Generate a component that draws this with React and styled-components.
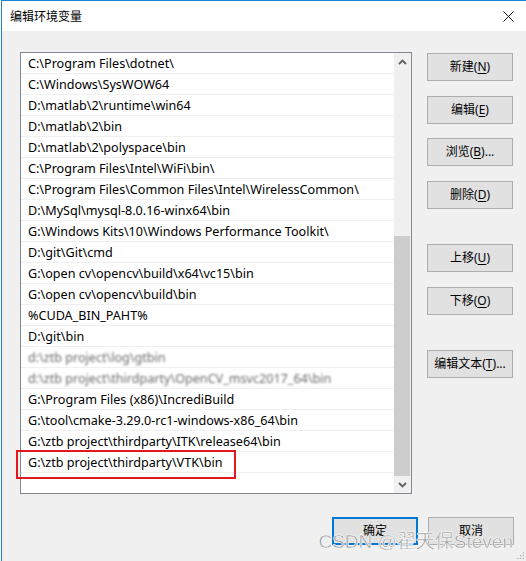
import styled, { createGlobalStyle } from "styled-components";

const GlobalStyle = createGlobalStyle`
  html, body {
    margin: 0;
    padding: 0;
    background: #ffffff;
  }
  * {
    box-sizing: border-box;
  }
`;

const uiFont = `"Noto Sans", "Noto Sans CJK SC", sans-serif`;

const Window = styled.div`
  position: relative;
  margin-left: 1px;
  width: 525px;
  height: 561px;
  border-top: 1px solid #1883d7;
  border-left: 1px solid #1883d7;
  background: #f0f0f0;
  font-family: ${uiFont};
  font-size: 12px;
  color: #000;
  display: flex;
  flex-direction: column;
  overflow: hidden;
`;

const TitleBar = styled.div`
  height: 30px;
  flex: none;
  background: #ffffff;
  display: flex;
  align-items: center;
  justify-content: space-between;
  padding: 0 12px 0 8px;
`;

const Title = styled.span`
  font-family: "Noto Sans CJK SC", sans-serif;
  font-size: 12px;
  line-height: 1;
`;

const CloseIcon = () => (
  <svg width="11" height="11" viewBox="0 0 11 11">
    <path d="M0.5 0.5 L10.5 10.5 M10.5 0.5 L0.5 10.5" stroke="#111" strokeWidth="1" />
  </svg>
);

const Body = styled.div`
  flex: 1;
  display: flex;
  flex-direction: column;
  padding: 21px 0 0 18px;
`;

const Main = styled.div`
  display: flex;
  gap: 15px;
`;

const ListBox = styled.div`
  width: 392px;
  height: 442px;
  border: 1px solid #828790;
  background: #ffffff;
  display: flex;
`;

const Rows = styled.div`
  flex: 1;
  display: flex;
  flex-direction: column;
`;

const Row = styled.div`
  position: relative;
  height: 21px;
  flex: none;
  display: flex;
  align-items: center;
  padding: 2px 0 0 7px;
  border-bottom: 1px solid #f0f0f0;
  white-space: nowrap;
  font-size: 12.6px;
  line-height: 1;
`;

const Blurred = styled.span`
  color: #6a6a6a;
  filter: blur(1.3px);
`;

const Highlight = styled.div`
  position: absolute;
  left: -5px;
  top: -2px;
  width: 220px;
  height: 29px;
  border: 2px solid #e3171e;
`;

const ScrollBar = styled.div`
  width: 17px;
  flex: none;
  background: #f0f0f0;
  display: flex;
  flex-direction: column;
`;

const ScrollArrow = styled.div`
  height: 17px;
  flex: none;
  display: flex;
  align-items: center;
  justify-content: center;
`;

const ScrollTrack = styled.div`
  flex: 1;
  display: flex;
  flex-direction: column;
  justify-content: flex-end;
`;

const Thumb = styled.div`
  height: 240px;
  margin: 0 1px 0 0;
  background: #cdcdcd;
`;

const Chevron = ({ down }) => (
  <svg width="9" height="6" viewBox="0 0 9 6">
    <path
      d={down ? "M1 1 L4.5 4.5 L8 1" : "M1 5 L4.5 1.5 L8 5"}
      fill="none"
      stroke="#606060"
      strokeWidth="1.8"
    />
  </svg>
);

const SideButtons = styled.div`
  display: flex;
  flex-direction: column;
  gap: 14.5px;
  padding-top: 1px;
`;

const Button = styled.button`
  width: 86px;
  height: 28px;
  margin-top: ${({ $spaced }) => ($spaced ? "21px" : "0")};
  padding: 0;
  background: #e1e1e1;
  border: ${({ $primary }) => ($primary ? "2px solid #0078d7" : "1px solid #adadad")};
  font-family: ${uiFont};
  font-size: 12px;
  color: #000;
  display: flex;
  align-items: center;
  justify-content: center;
  line-height: 1;

  u {
    text-decoration: underline;
    text-underline-offset: 2px;
  }
`;

const Footer = styled.div`
  display: flex;
  justify-content: flex-end;
  gap: 10px;
  padding: 23px 12px 0 0;
`;

const Watermark = styled.div`
  position: absolute;
  right: 13px;
  bottom: 8px;
  font-family: "Liberation Sans", "Noto Sans CJK SC", sans-serif;
  font-size: 19px;
  color: #9a9a9a;
  -webkit-text-stroke: 0.4px #ffffff;
  text-shadow: 0 0 1px #fff, 0 0 1px #fff;
  white-space: nowrap;
  pointer-events: none;
`;

const Grip = styled.div`
  position: absolute;
  right: 2px;
  bottom: 2px;
  width: 8px;
  height: 8px;
  background-image: radial-gradient(circle, #b8b8b8 0.8px, transparent 1.1px);
  background-size: 3px 3px;
  clip-path: polygon(100% 0, 100% 100%, 0 100%);
`;

const paths = [
  "C:\\Program Files\\dotnet\\",
  "C:\\Windows\\SysWOW64",
  "D:\\matlab\\2\\runtime\\win64",
  "D:\\matlab\\2\\bin",
  "D:\\matlab\\2\\polyspace\\bin",
  "C:\\Program Files\\Intel\\WiFi\\bin\\",
  "C:\\Program Files\\Common Files\\Intel\\WirelessCommon\\",
  "D:\\MySql\\mysql-8.0.16-winx64\\bin",
  "G:\\Windows Kits\\10\\Windows Performance Toolkit\\",
  "D:\\git\\Git\\cmd",
  "G:\\open cv\\opencv\\build\\x64\\vc15\\bin",
  "G:\\open cv\\opencv\\build\\bin",
  "%CUDA_BIN_PAHT%",
  "D:\\git\\bin",
  { blur: "d:\\ztb project\\log\\gtbin" },
  { blur: "d:\\ztb project\\thirdparty\\OpenCV_msvc2017_64\\bin" },
  "G:\\Program Files (x86)\\IncrediBuild",
  "G:\\tool\\cmake-3.29.0-rc1-windows-x86_64\\bin",
  "G:\\ztb project\\thirdparty\\ITK\\release64\\bin",
  { selected: "G:\\ztb project\\thirdparty\\VTK\\bin" },
];

const sideButtons = [
  { label: "新建", key: "N" },
  { label: "编辑", key: "E" },
  { label: "浏览", key: "B", more: true },
  { label: "删除", key: "D" },
  { label: "上移", key: "U", spaced: true },
  { label: "下移", key: "O" },
  { label: "编辑文本", key: "T", more: true, spaced: true },
];

export default function App() {
  return (
    <>
      <GlobalStyle />
      <Window>
        <TitleBar>
          <Title>编辑环境变量</Title>
          <CloseIcon />
        </TitleBar>
        <Body>
          <Main>
            <ListBox>
              <Rows>
                {paths.map((p, i) => (
                  <Row key={i}>
                    {typeof p === "string" && p}
                    {p.blur && <Blurred>{p.blur}</Blurred>}
                    {p.selected && (
                      <>
                        {p.selected}
                        <Highlight />
                      </>
                    )}
                  </Row>
                ))}
              </Rows>
              <ScrollBar>
                <ScrollArrow>
                  <Chevron />
                </ScrollArrow>
                <ScrollTrack>
                  <Thumb />
                </ScrollTrack>
                <ScrollArrow>
                  <Chevron down />
                </ScrollArrow>
              </ScrollBar>
            </ListBox>
            <SideButtons>
              {sideButtons.map((b) => (
                <Button key={b.key} $spaced={b.spaced}>
                  {b.label}(<u>{b.key}</u>){b.more && "..."}
                </Button>
              ))}
            </SideButtons>
          </Main>
          <Footer>
            <Button $primary>确定</Button>
            <Button>取消</Button>
          </Footer>
        </Body>
        <Watermark>CSDN @翟天保Steven</Watermark>
        <Grip />
      </Window>
    </>
  );
}
